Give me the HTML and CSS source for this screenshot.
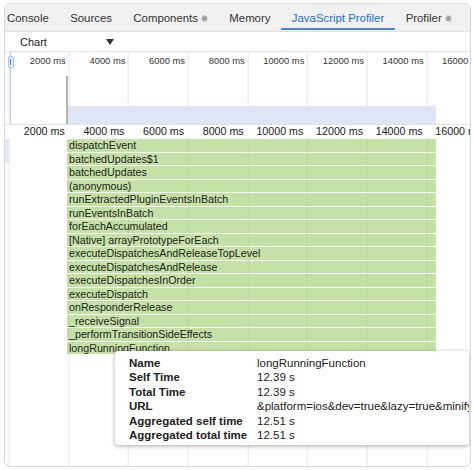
FILE: index.html
```html
<html>
<head>
    <link rel="stylesheet" href="styles.css">
</head>
<body>
    <div class="panel">
        <div class="tabbar">
            <div class="tab first">Console</div>
            <div class="tab">Sources</div>
            <div class="tab">Components
                <svg class="atom" width="7" height="7" viewBox="0 0 14 14">
                    <g fill="none" stroke="#9a9a9a" stroke-width="1.6">
                        <ellipse cx="7" cy="7" rx="6" ry="2.4"/>
                        <ellipse cx="7" cy="7" rx="6" ry="2.4" transform="rotate(60 7 7)"/>
                        <ellipse cx="7" cy="7" rx="6" ry="2.4" transform="rotate(120 7 7)"/>
                    </g>
                    <circle cx="7" cy="7" r="1.6" fill="#9a9a9a"/>
                </svg>
            </div>
            <div class="tab">Memory</div>
            <div class="tab active">JavaScript Profiler</div>
            <div class="tab">Profiler
                <svg class="atom" width="7" height="7" viewBox="0 0 14 14">
                    <g fill="none" stroke="#9a9a9a" stroke-width="1.6">
                        <ellipse cx="7" cy="7" rx="6" ry="2.4"/>
                        <ellipse cx="7" cy="7" rx="6" ry="2.4" transform="rotate(60 7 7)"/>
                        <ellipse cx="7" cy="7" rx="6" ry="2.4" transform="rotate(120 7 7)"/>
                    </g>
                    <circle cx="7" cy="7" r="1.6" fill="#9a9a9a"/>
                </svg>
            </div>
        </div>

        <div class="toolbar">
            <div class="select">
                <span>Chart</span>
                <svg width="8" height="6" viewBox="0 0 8 6"><polygon points="0,0 8,0 4,6" fill="#333"/></svg>
            </div>
        </div>

        <div class="overview">
            <div class="ruler small">
                <div class="tick">2000 ms</div>
                <div class="tick">4000 ms</div>
                <div class="tick">6000 ms</div>
                <div class="tick">8000 ms</div>
                <div class="tick">10000 ms</div>
                <div class="tick">12000 ms</div>
                <div class="tick">14000 ms</div>
                <div class="tick">16000 ms</div>
            </div>
            <div class="ov-plot">
                <div class="ov-spike"></div>
                <div class="ov-fill"></div>
            </div>
            <div class="ov-handle"><div class="knob"></div></div>
        </div>

        <div class="ruler main">
            <div class="tick">2000 ms</div>
            <div class="tick">4000 ms</div>
            <div class="tick">6000 ms</div>
            <div class="tick">8000 ms</div>
            <div class="tick">10000 ms</div>
            <div class="tick">12000 ms</div>
            <div class="tick">14000 ms</div>
            <div class="tick">16000 ms</div>
        </div>

        <div class="flame">
            <div class="gutter"></div>
            <div class="stack">
                <div class="bar">dispatchEvent</div>
                <div class="bar">batchedUpdates$1</div>
                <div class="bar">batchedUpdates</div>
                <div class="bar">(anonymous)</div>
                <div class="bar">runExtractedPluginEventsInBatch</div>
                <div class="bar">runEventsInBatch</div>
                <div class="bar">forEachAccumulated</div>
                <div class="bar">[Native] arrayPrototypeForEach</div>
                <div class="bar">executeDispatchesAndReleaseTopLevel</div>
                <div class="bar">executeDispatchesAndRelease</div>
                <div class="bar">executeDispatchesInOrder</div>
                <div class="bar">executeDispatch</div>
                <div class="bar">onResponderRelease</div>
                <div class="bar">_receiveSignal</div>
                <div class="bar">_performTransitionSideEffects</div>
                <div class="bar">longRunningFunction</div>
            </div>

            <div class="tooltip">
                <div class="tip-row"><span class="tip-label">Name</span><span>longRunningFunction</span></div>
                <div class="tip-row"><span class="tip-label">Self Time</span><span>12.39 s</span></div>
                <div class="tip-row"><span class="tip-label">Total Time</span><span>12.39 s</span></div>
                <div class="tip-row"><span class="tip-label">URL</span><span>&amp;platform=ios&amp;dev=true&amp;lazy=true&amp;minify=false</span></div>
                <div class="tip-row"><span class="tip-label">Aggregated self time</span><span>12.51 s</span></div>
                <div class="tip-row"><span class="tip-label">Aggregated total time</span><span>12.51 s</span></div>
            </div>
        </div>
    </div>
</body>
</html>
```

FILE: styles.css
```css
body {
    margin: 0;
    background-color: white;
    font-family: "Liberation Sans", Arial, sans-serif;
    color: #333;
}

.panel {
    margin: 3px 3px 0 4px;
    height: 464px;
    box-sizing: border-box;
    border: 1px solid #d9d9d9;
    border-radius: 6px;
    overflow: hidden;
    display: flex;
    flex-direction: column;
}

/* tabs */
.tabbar {
    display: flex;
    height: 27px;
    flex-shrink: 0;
    background-color: #f1f1f1;
    border-bottom: 1px solid #e2e2e2;
    white-space: nowrap;
}

.tab {
    position: relative;
    display: flex;
    align-items: center;
    gap: 3px;
    padding: 0 10.7px;
    font-size: 11.4px;
    color: #333;
}

.tab.first {
    padding-left: 2px;
}

.tab.active {
    color: #1a6fd6;
}

.tab.active::after {
    content: "";
    position: absolute;
    left: 0;
    right: 0;
    bottom: 1px;
    height: 2px;
    background-color: #4a86e0;
}

.atom {
    margin-top: 1px;
}

/* toolbar */
.toolbar {
    height: 19px;
    flex-shrink: 0;
    border-bottom: 1px solid #e2e2e2;
    display: flex;
    align-items: center;
    padding-left: 15px;
}

.select {
    width: 94px;
    display: flex;
    justify-content: space-between;
    align-items: center;
    font-size: 11px;
    color: #222;
}

/* time rulers */
.ruler {
    display: flex;
    margin-left: 3.65px;
    white-space: nowrap;
}

.tick {
    flex: 0 0 59.65px;
    box-sizing: border-box;
    text-align: right;
}

.ruler.small {
    height: 17px;
    line-height: 17px;
    font-size: 9.4px;
}

.ruler.small .tick {
    padding-right: 2.5px;
}

.ruler.main {
    height: 14px;
    flex-shrink: 0;
    line-height: 13px;
    font-size: 10.7px;
    color: #222;
}

.ruler.main .tick {
    padding-right: 3.5px;
}

/* overview */
.overview {
    position: relative;
    height: 72px;
    flex-shrink: 0;
    border-bottom: 1px solid #e2e2e2;
    background-image: repeating-linear-gradient(to right, #e6e6e6 0 1px, transparent 1px 59.65px);
    background-position: 3.65px 0;
}

.ov-plot {
    height: 55px;
    display: flex;
    align-items: flex-end;
    margin-left: 61px;
}

.ov-spike {
    width: 1.5px;
    height: 48px;
    background-color: #b3b3b3;
}

.ov-fill {
    width: 368px;
    height: 18px;
    background-color: #dfe4f7;
}

.ov-handle {
    position: absolute;
    left: 4.5px;
    top: 0;
    width: 1.5px;
    height: 72px;
    background-color: #b9cbee;
}

.knob {
    position: absolute;
    left: -2px;
    top: 4px;
    width: 4px;
    height: 10px;
    border: 1px solid #a9c0ec;
    border-radius: 2px;
    background-color: #e9effb;
}

.knob::after {
    content: "";
    position: absolute;
    left: 1.5px;
    top: 2px;
    width: 1px;
    height: 6px;
    background-color: #4a7fd8;
}

/* flame chart */
.flame {
    position: relative;
    flex: 1;
    display: flex;
    background-image: repeating-linear-gradient(to right, #e8e8e8 0 1px, transparent 1px 59.65px);
    background-position: 3.65px 0;
}

.gutter {
    width: 4px;
    height: 24px;
    background-color: #e4ebf8;
}

.stack {
    margin-left: 58px;
    width: 369px;
}

.bar {
    height: 12.5px;
    margin-bottom: 1px;
    line-height: 12.5px;
    padding-left: 2px;
    font-size: 10.7px;
    color: #222;
    background-color: rgba(139, 197, 77, 0.5);
    white-space: nowrap;
}

.tooltip {
    position: absolute;
    left: 110px;
    top: 212px;
    width: 354px;
    height: 94px;
    box-sizing: border-box;
    padding: 5px 0 0 14px;
    background-color: white;
    border-radius: 3px;
    box-shadow: 0 1px 4px rgba(0, 0, 0, 0.35);
    overflow: hidden;
    font-size: 11.5px;
    color: #222;
    white-space: nowrap;
}

.tip-row {
    display: flex;
    height: 14.4px;
    line-height: 14.4px;
}

.tip-label {
    flex: 0 0 128px;
    font-weight: bold;
}
```
